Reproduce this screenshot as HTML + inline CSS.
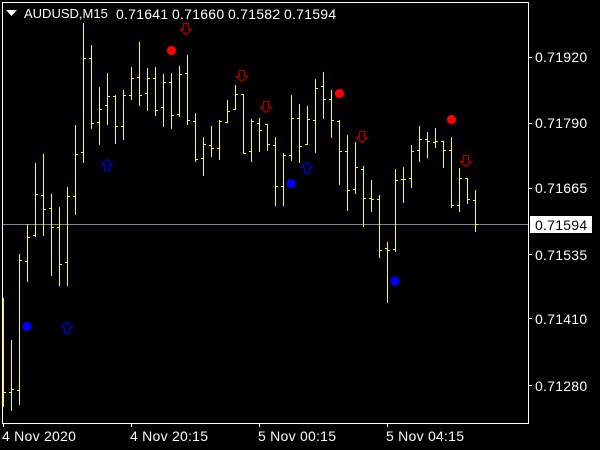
<!DOCTYPE html>
<html>
<head>
<meta charset="utf-8">
<style>
html,body{margin:0;padding:0;background:#000;width:600px;height:450px;overflow:hidden}
.t{position:absolute;font-family:"Liberation Sans",sans-serif;font-size:14px;line-height:16px;color:#fff;white-space:nowrap;letter-spacing:.25px}
svg{position:absolute;left:0;top:0}
</style>
</head>
<body>
<svg width="600" height="450" viewBox="0 0 600 450">
<rect width="600" height="450" fill="#000"/>
<path shape-rendering="crispEdges" fill="none" stroke="#fff" d="M2.5 2.5H528.5V423.5H2.5ZM3.5 424V427M131.5 424V427M259.5 424V427M387.5 424V427M529 57.5h3M529 123.5h3M529 188.5h3M529 254.5h3M529 318.5h3M529 385.5h3"/>
<path shape-rendering="crispEdges" fill="none" stroke="#778899" d="M3 224.5H528"/>
<path shape-rendering="crispEdges" fill="none" stroke="#ffff00" d="
M3.5 298V407M4 392.5h2
M11.5 340V411M9 392.5h2M12 389.5h2
M19.5 254V405M17 390.5h2M20 260.5h2
M27.5 224V282M25 261.5h2M28 237.5h2
M35.5 163V237M33 235.5h2M36 194.5h2
M43.5 154V236M41 195.5h2M44 209.5h2
M51.5 194V276M49 208.5h2M52 227.5h2
M59.5 207V286M57 227.5h2M60 264.5h2
M67.5 187V286M65 262.5h2M68 196.5h2
M75.5 125V215M73 196.5h2M76 154.5h2
M83.5 23V163M81 152.5h2M84 58.5h2
M91.5 45V129M89 58.5h2M92 123.5h2
M99.5 87V145M97 122.5h2M100 109.5h2
M107.5 73V125M105 105.5h2M108 96.5h2
M115.5 95V144M113 96.5h2M116 126.5h2
M123.5 90V140M121 126.5h2M124 95.5h2
M131.5 67V100M129 95.5h2M132 78.5h2
M139.5 42V106M137 77.5h2M140 95.5h2
M147.5 68V111M145 93.5h2M148 78.5h2
M155.5 67V116M153 78.5h2M156 110.5h2
M163.5 74V127M161 107.5h2M164 82.5h2
M171.5 73V129M169 82.5h2M172 115.5h2
M179.5 66V117M177 114.5h2M180 74.5h2
M187.5 55V125M185 73.5h2M188 120.5h2
M195.5 113V162M193 121.5h2M196 159.5h2
M203.5 137V176M201 158.5h2M204 144.5h2
M211.5 126V157M209 145.5h2M212 148.5h2
M219.5 120V160M217 148.5h2M220 121.5h2
M227.5 100V123M225 122.5h2M228 111.5h2
M235.5 85V110M233 109.5h2M236 94.5h2
M243.5 94V154M241 94.5h2M244 153.5h2
M251.5 119V162M249 151.5h2M252 121.5h2
M259.5 118V152M257 123.5h2M260 130.5h2
M267.5 124V151M265 124.5h2M268 144.5h2
M275.5 137V206M273 145.5h2M276 186.5h2
M283.5 153V206M281 186.5h2M284 155.5h2
M291.5 95V161M289 155.5h2M292 118.5h2
M299.5 104V163M297 118.5h2M300 146.5h2
M307.5 106V145M305 144.5h2M308 119.5h2
M315.5 79V153M313 120.5h2M316 88.5h2
M323.5 72V119M321 86.5h2M324 99.5h2
M331.5 90V138M329 99.5h2M332 120.5h2
M339.5 120V185M337 121.5h2M340 151.5h2
M347.5 135V211M345 151.5h2M348 190.5h2
M355.5 142V194M353 189.5h2M356 167.5h2
M363.5 166V227M361 169.5h2M364 198.5h2
M371.5 180V212M369 198.5h2M372 199.5h2
M379.5 195V258M377 199.5h2M380 250.5h2
M387.5 242V303M385 248.5h2M388 250.5h2
M395.5 169V252M393 249.5h2M396 180.5h2
M403.5 167V203M401 179.5h2M404 179.5h2
M411.5 145V188M409 178.5h2M412 151.5h2
M419.5 126V162M417 150.5h2M420 139.5h2
M427.5 132V158M425 139.5h2M428 141.5h2
M435.5 128V148M433 142.5h2M436 141.5h2
M443.5 141V168M441 141.5h2M444 150.5h2
M451.5 137V208M449 150.5h2M452 205.5h2
M459.5 168V212M457 205.5h2M460 178.5h2
M467.5 178V204M465 178.5h2M468 199.5h2
M475.5 190V232M473 200.5h2M476 224.5h2
"/>
<g fill="#ff0000">
<circle cx="171.5" cy="50.5" r="4.6"/>
<circle cx="339.5" cy="93.5" r="4.6"/>
<circle cx="451.5" cy="119.5" r="4.6"/>
</g>
<g fill="#0000ff">
<circle cx="27" cy="326.5" r="4.6"/>
<circle cx="291" cy="183.5" r="4.6"/>
<circle cx="395" cy="281" r="4.6"/>
</g>
<g fill="none" stroke="#a80000" stroke-width="1.3">
<path d="M183.5 23.5H188.5V29.5H191.5L186 34.5L180.5 29.5H183.5Z"/>
<path d="M239.5 70.5H244.5V76.5H247.5L242 81.5L236.5 76.5H239.5Z"/>
<path d="M263.5 101.5H268.5V107.5H271.5L266 112.5L260.5 107.5H263.5Z"/>
<path d="M359.5 131.5H364.5V137.5H367.5L362 142.5L356.5 137.5H359.5Z"/>
<path d="M463.5 155.5H468.5V161.5H471.5L466 166.5L460.5 161.5H463.5Z"/>
</g>
<g fill="none" stroke="#0000c8" stroke-width="1.3">
<path d="M104.5 170.5H109.5V164.5H112.5L107 159.5L101.5 164.5H104.5Z"/>
<path d="M64.5 333.5H69.5V327.5H72.5L67 322.5L61.5 327.5H64.5Z"/>
<path d="M304.5 173.5H309.5V167.5H312.5L307 162.5L301.5 167.5H304.5Z"/>
</g>
<path d="M6 10H17L11.5 16Z" fill="#fff"/>
<rect x="530" y="216" width="62" height="17" fill="#fff"/>
</svg>
<div class="t" style="left:24px;top:6px;font-size:13px;letter-spacing:0">AUDUSD,M15</div>
<div class="t" style="left:116px;top:6px">0.71641</div>
<div class="t" style="left:172px;top:6px">0.71660</div>
<div class="t" style="left:228px;top:6px">0.71582</div>
<div class="t" style="left:284px;top:6px">0.71594</div>
<div class="t" style="left:535px;top:49px">0.71920</div>
<div class="t" style="left:535px;top:115px">0.71790</div>
<div class="t" style="left:535px;top:180px">0.71665</div>
<div class="t" style="left:535px;top:217px;color:#000">0.71594</div>
<div class="t" style="left:535px;top:247px">0.71535</div>
<div class="t" style="left:535px;top:311px">0.71410</div>
<div class="t" style="left:535px;top:378px">0.71280</div>
<div class="t" style="left:2px;top:428px">4 Nov 2020</div>
<div class="t" style="left:130px;top:428px">4 Nov 20:15</div>
<div class="t" style="left:258px;top:428px">5 Nov 00:15</div>
<div class="t" style="left:386px;top:428px">5 Nov 04:15</div>
</body>
</html>
